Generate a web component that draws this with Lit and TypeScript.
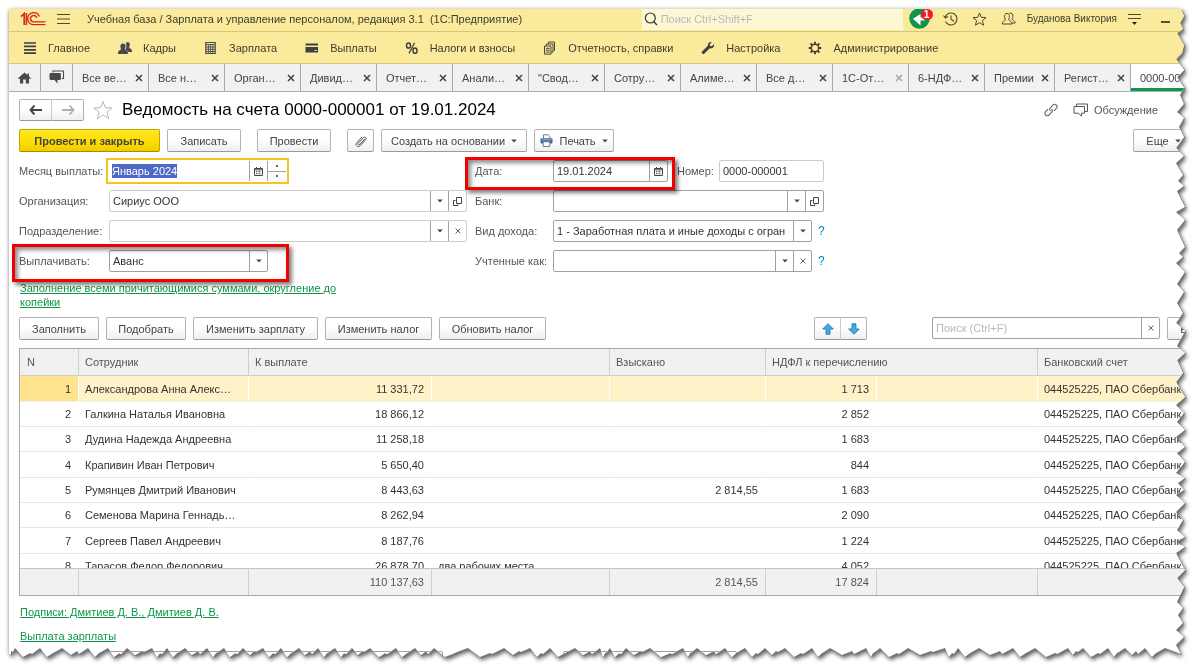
import { LitElement, html, css, svg, nothing, unsafeCSS } from "lit";
import { customElement, query } from "lit/decorators.js";
import { classMap } from "lit/directives/class-map.js";

/* Torn paper edge: [distance along the edge, depth cut from the edge]. */
const RIGHT_EDGE: [number, number][] = [
  [0, 4], [7, 1], [14, 5], [20, 2], [24, 8], [36, 1], [44, 3], [50, 9], [61, 1], [68, 8], [79, 1], [86, 5],
  [95, 1], [103, 8], [109, 1], [118, 6], [128, 1], [139, 9], [147, 1], [154, 9], [166, 2], [172, 7], [177, 1],
  [182, 8], [198, 0], [203, 9], [211, 0], [221, 8], [238, 0], [244, 6], [248, 2], [254, 9], [263, 0], [275, 8],
  [283, 1], [294, 8], [304, 2], [314, 9], [322, 0], [337, 8], [344, 0], [351, 8], [364, 2], [373, 9], [388, 0],
  [396, 9], [404, 1], [413, 8], [421, 0], [428, 9], [438, 0], [444, 8], [453, 0], [464, 9], [469, 0], [474, 7],
  [481, 1], [486, 9], [494, 0], [503, 9], [511, 2], [521, 8], [528, 0], [533, 9], [538, 0], [544, 9], [561, 0],
  [569, 8], [578, 1], [593, 8], [599, 2], [606, 7], [614, 2], [621, 9], [628, 1], [636, 9],
];
const BOTTOM_NOTCHES = [
  6, 31, 53, 79, 99, 118, 143, 158, 176, 198, 215, 234, 254, 272, 290, 309, 326, 343, 361, 387, 406, 425, 459,
  495, 521, 541, 566, 591, 601, 617, 641, 674, 688, 716, 736, 756, 776, 803, 821, 857, 871, 899, 936, 949, 970,
  1004, 1026, 1059, 1074, 1099, 1116, 1136, 1156,
];

function tornOutline(): string {
  const points = ["0 0", "calc(100% - 4px) 0"];
  for (const [y, cut] of RIGHT_EDGE) points.push(`calc(100% - ${cut}px) ${y}px`);
  points.push("calc(100% - 4px) calc(100% - 3px)");
  for (let i = BOTTOM_NOTCHES.length - 1; i >= 0; i--) {
    const x = BOTTOM_NOTCHES[i];
    const prev = i > 0 ? BOTTOM_NOTCHES[i - 1] : 0;
    const third = Math.round((x - prev) / 3);
    points.push(`${x}px calc(100% - 9px)`);
    points.push(`${x - third}px calc(100% - ${i % 2 ? 3 : 5}px)`);
    points.push(`${x - third - 2}px calc(100% - ${i % 3 ? 4 : 6}px)`);
    points.push(`${prev + third}px calc(100% - ${i % 3 ? 0 : 2}px)`);
  }
  points.push("0 calc(100% - 4px)");
  return `polygon(${points.join(",")})`;
}

const icon = (w: number, h: number, body: unknown) =>
  html`<svg class="icon" width=${w} height=${h} viewBox="0 0 ${w} ${h}" aria-hidden="true">${body}</svg>`;

const icons = {
  logo: icon(26, 14, svg`<g fill="none" stroke="#d8241c" stroke-width="1.4"><path d="M1 4.6 4.2 1.6V13M6.4 1V13" stroke-width="1.6"/><path d="M19.3 4.4A6 6 0 1 0 14 12.6H25.5"/><path d="M16.8 5.8A3.2 3.2 0 1 0 14 9.9H25.5"/></g>`),
  burger: icon(14, 12, svg`<path d="M0 1.500h13M0 6h13M0 10.500h13" stroke="#4a4738" stroke-width="1.1"/>`),
  main: icon(14, 14, svg`<path d="M1 2h12M1 5.400h12M1 8.800h12M1 12.200h12" stroke="#3f3f3f" stroke-width="1.7"/>`),
  staff: icon(14, 14, svg`<g fill="#4a4a4a"><path d="M9.3 1c1.8 0 2.6 1.3 2.5 3-.1 1.400-.6 2-.7 2.800.4.900 2.900.900 2.900 3.200V11H10.200C9.600 9.300 7.900 9 7.500 8.400 8.300 7.400 8.700 5.700 8.200 3.800 7.900 2 8.300 1 9.300 1z"/><path d="M5 2.500c1.900 0 2.700 1.400 2.600 3C7.500 7 7 7.500 6.900 8.300c.4 1 2.900.9 3 3.300V13H0v-1.400C.1 9.200 2.700 9.300 3.100 8.300 3 7.500 2.500 7 2.400 5.500 2.300 3.900 3.100 2.500 5 2.500z"/></g>`),
  calc: icon(14, 14, svg`<path d="M1.800 1.500h9.400v11H1.800z" fill="none" stroke="#4a4a4a" stroke-width="1.2"/><path d="M2 3.500h9M2 6h9M2 8.300h9M2 10.500h9M4.400 4v8.500M6.600 4v8.500M8.800 4v8.500" stroke="#4a4a4a" stroke-width=".9"/>`),
  card: icon(14, 14, svg`<path d="M.5 2.500h12.500v2H.5zM.5 6h12.500v5.500H.5z" fill="#3f3f3f"/><path d="M9.500 9.500h2.200" stroke="#faeb9c"/>`),
  percent: icon(14, 14, svg`<g fill="none" stroke="#3f3f3f" stroke-width="1.5"><ellipse cx="3.500" cy="4.500" rx="2" ry="2.600"/><ellipse cx="10" cy="9.700" rx="2" ry="2.600"/><path d="M9.600 1.800 4 12.400" stroke-width="1.200"/></g>`),
  reports: icon(14, 14, svg`<g fill="none" stroke="#4a4738"><path d="M1.500 5h6.500v8.200H1.500zM3.500 5V3h6.500v8.200H8M5.500 3V1h6v8.200h-1.500"/><path d="M2.800 7.300h4M2.800 9.200h4M2.800 11.100h4"/></g>`),
  wrench: icon(14, 14, svg`<path d="M13 3.200 10.700 5.200 8.900 4.800 8.700 3.200 10.900 1.100C8.700.500 6.600 2 6.800 4.700L.900 10.800c-.8 1.500 1 3 2.300 2L8.800 7.300C11.500 7.900 13.600 5.700 13 3.200z" fill="#3f3f3f"/>`),
  gear: icon(14, 14, svg`<circle cx="7" cy="7" r="3.700" fill="none" stroke="#3f3f3f" stroke-width="1.500"/><path d="M7 .7v2.400M7 10.900v2.400M.7 7h2.400M10.900 7h2.400M2.500 2.500l1.700 1.700M9.800 9.800l1.700 1.700M2.500 11.500l1.700-1.700M9.800 4.200l1.700-1.700" stroke="#3f3f3f" stroke-width="1.900"/>`),
  search: icon(14, 14, svg`<circle cx="6.300" cy="6" r="5" fill="none" stroke="#3b3b3b" stroke-width="1.200"/><path d="m9.800 9.800 3.200 3.200" stroke="#3b3b3b" stroke-width="1.500"/>`),
  news: icon(22, 22, svg`<circle cx="10.500" cy="10.500" r="10.300" fill="#0f9648"/><path d="M4 10.700 11.500 6v3.500h4v3h-4V17.500z" fill="#fff"/>`),
  history: icon(15, 14, svg`<path d="M2.300 5A6 6 0 1 1 2.500 9.500M.5 3.500 2.400 6 5 4.500M8 3.500V7.300l3 2" fill="none" stroke="#4a4738" stroke-width="1.100"/>`),
  star: icon(15, 14, svg`<path d="m7.500 1 1.800 4.300 4.700.3-3.600 3 1.200 4.600-4.100-2.500-4.100 2.500 1.200-4.600-3.600-3 4.700-.3z" fill="none" stroke="#4a4738"/>`),
  bigStar: icon(22, 20, svg`<path d="m11 1.500 2.400 6.200 6.800.3-5.300 4.200 1.800 6.500L11 15l-5.700 3.700 1.800-6.500L1.800 8l6.800-.3z" fill="none" stroke="#b5b9bd"/>`),
  users: icon(15, 14, svg`<g fill="none" stroke="#4a4738"><path d="M6 1.500C8 1.500 8.600 3 8.400 4.800 8.200 6.300 7.500 7 7.800 8c.8 1.200 3.200 1 3.400 4H1.200c.2-3 2.400-2.800 3-4 .2-1-.500-1.700-.6-3.200C3.400 3 4 1.500 6 1.500z"/><path d="M8.500 1.200c2.200-.5 3.700.900 3.300 3.400-.2 1.500-1 2-.6 2.900.6.900 2.800 1 3 3.500h-3"/></g>`),
  options: icon(14, 13, svg`<path d="M0 1.500h13M0 5.500h13" stroke="#4a4738" stroke-width="1.100"/><path d="M4 9h5L6.500 12z" fill="#222"/>`),
  home: icon(13, 12, svg`<path d="M6.500.5 0 6.200l1 1 1-.9v5.200h3.200V7.500h2.600v4H11V6.300l1 .9 1-1-2-1.800V1.500H9.500v1.600z" fill="#4a4a4a"/>`),
  chats: icon(16, 15, svg`<path d="M4 2.500V1h10.500v7.500h-1.700" fill="none" stroke="#4a4a4a" stroke-width="1.100"/><path d="M1.500 3h9.200q1.200 0 1.200 1.200v4.600q0 1.200-1.200 1.200H8.500v3.500L5.500 10h-4Q.5 10 .5 8.800V4.200Q.5 3 1.500 3z" fill="#4a4a4a"/>`),
  close: icon(8, 8, svg`<path d="m1 1 6 6M7 1 1 7" stroke="currentColor" stroke-width="1.500"/>`),
  cross: icon(6, 6, svg`<path d="m.5.5 5 5M5.500.5l-5 5" stroke="#666"/>`),
  back: icon(14, 10, svg`<path d="M5.500.500 1.500 5l4 4.500M1.500 5H13" fill="none" stroke="#444" stroke-width="2"/>`),
  forward: icon(14, 10, svg`<path d="M8.500.500 12.500 5l-4 4.500M12.500 5H1" fill="none" stroke="#b0b0b0" stroke-width="1.800"/>`),
  link: icon(14, 14, svg`<g fill="none" stroke="#666" stroke-width="1.100"><path d="M6.500 8.200C5.200 7 5.300 5.900 6.300 4.900L9 2c2.200-2 5.400.9 3.500 3.200L10 7.900"/><path d="M7.500 5.800c1.300 1.200 1.200 2.300.2 3.300L5 12c-2.200 2-5.400-.9-3.500-3.200L4 6.100"/></g>`),
  discuss: icon(15, 14, svg`<g fill="none" stroke="#555"><path d="M3.500 3V1h11v7.500H12"/><path d="M1 3.500h10.500v6.700H8.500v3L5.500 10.200H1z"/></g>`),
  clip: icon(14, 14, svg`<path d="m10.800 5-5 5.500c-1 .8-2.200-.3-1.500-1.300L9.500 3.500c1.300-1.300 3.500.4 2.300 2.100L6 11.900c-2 1.900-5.200-.6-3.400-3L8 3" fill="none" stroke="#555"/>`),
  printer: icon(13, 13, svg`<path d="M3.500 4.500V.8h4.700l1.600 1.600v2.100" fill="#fff" stroke="#6f8196"/><rect x=".5" y="4.300" width="12" height="5.200" rx="1" fill="#3c6690"/><path d="M1.500 5.800h10" stroke="#9db9d3"/><path d="M3.200 7.800h6.600v4.700H3.200z" fill="#fff" stroke="#6f8196"/>`),
  caret: icon(6, 4, svg`<path d="M.3.500h5.400L3 3.500z" fill="#444"/>`),
  calendar: icon(9, 9, svg`<path d="M.5 1.500h8v7h-8zM.5 2.800h8" fill="none" stroke="#444"/><path d="M2.500 0v2M6.500 0v2M2 4.700h5M2 6.700h5" stroke="#444" stroke-dasharray="1 .5"/>`),
  open: icon(10, 9, svg`<path d="M3.500.5h5v6h-5z" fill="none" stroke="#444"/><path d="M2.500 3.500h-2v5h4.500V7.500" fill="none" stroke="#444"/>`),
  up: icon(12, 12, svg`<path d="M6 .7 11.300 6H8v5.300H4V6H.7z" fill="#43ace8" stroke="#1e6ea8" stroke-width=".8"/>`),
  down: icon(12, 12, svg`<path d="M6 11.300 11.300 6H8V.7H4V6H.7z" fill="#43ace8" stroke="#1e6ea8" stroke-width=".8"/>`),
};

const SECTIONS: [unknown, string][] = [
  [icons.main, "Главное"],
  [icons.staff, "Кадры"],
  [icons.calc, "Зарплата"],
  [icons.card, "Выплаты"],
  [icons.percent, "Налоги и взносы"],
  [icons.reports, "Отчетность, справки"],
  [icons.wrench, "Настройка"],
  [icons.gear, "Администрирование"],
];

const TABS = [
  "Все ве…", "Все н…", "Орган…", "Дивид…", "Отчет…", "Анали…", "\"Свод…", "Сотру…", "Алиме…", "Все д…",
  "1С-От…", "6-НДФ…", "Премии", "Регист…",
];

interface Row {
  name: string;
  pay: string;
  note?: string;
  held?: string;
  tax: string;
}

const ROWS: Row[] = [
  { name: "Александрова Анна Алекс…", pay: "11 331,72", tax: "1 713" },
  { name: "Галкина Наталья Ивановна", pay: "18 866,12", tax: "2 852" },
  { name: "Дудина Надежда Андреевна", pay: "11 258,18", tax: "1 683" },
  { name: "Крапивин Иван Петрович", pay: "5 650,40", tax: "844" },
  { name: "Румянцев Дмитрий Иванович", pay: "8 443,63", held: "2 814,55", tax: "1 683" },
  { name: "Семенова Марина Геннадь…", pay: "8 262,94", tax: "2 090" },
  { name: "Сергеев Павел Андреевич", pay: "8 187,76", tax: "1 224" },
  { name: "Тарасов Федор Федорович", pay: "26 878,70", note: "два рабочих места", tax: "4 052" },
];

@customElement("app-root")
export class AppRoot extends LitElement {
  @query("#month") private monthInput!: HTMLInputElement;

  static styles = css`
    :host {
      display: block;
      box-sizing: border-box;
      padding: 9px 15px 14px 9px;
      overflow: hidden;
      background: #fff;
      color: #444;
      font: 11px/14px "Liberation Sans", Arial, sans-serif;
    }
    *, *::before, *::after { box-sizing: border-box; }
    button, input, select { font: inherit; color: inherit; margin: 0; }
    button { cursor: pointer; }
    .icon { display: block; flex: none; }
    .shadow {
      filter: drop-shadow(1px 1px 0 #777) drop-shadow(1px 2px 2px rgba(0, 0, 0, 0.6)) drop-shadow(0 0 2px rgba(0, 0, 0, 0.15));
    }
    .window { background: #fff; overflow: hidden; clip-path: ${unsafeCSS(tornOutline())}; }

    .titlebar {
      display: flex; align-items: center; height: 23px; padding: 0 15px 2px 11px;
      background: #faeb9c; border-bottom: 1px solid #d5c67c; color: #3f3c2c;
    }
    .plain { border: 0; padding: 0; background: none; display: flex; align-items: center; }
    .burger { margin: 0 16px 0 11px; }
    .app-name { flex: 1; white-space: pre; }
    .global-search {
      display: flex; align-items: center; gap: 3px; width: 261px; height: 21px; padding-left: 2px;
      background: #fef7d3;
    }
    .global-search input { flex: 1; min-width: 0; border: 0; padding: 0; background: none; outline: 0; }
    input::placeholder { color: #b9b9b9; opacity: 1; }
    .tools { display: flex; align-items: center; gap: 14px; margin-left: 6px; }
    .news { position: relative; margin-right: -2px; }
    .badge {
      position: absolute; top: 1px; right: -2px; width: 12px; height: 11px; border-radius: 6px;
      background: #ee1c25; color: #fff; font-size: 10px; line-height: 11px; font-weight: bold; text-align: center;
    }
    .user { font-size: 10px; margin: 0 -3px; }
    .minimize { width: 9px; height: 2px; margin: 6px 0 0 5px; background: #55513c; }

    .sections { display: flex; gap: 28px; height: 32px; padding: 0 14px; background: #faeb9c; border-bottom: 1px solid #d5c67c; }
    .sections a { display: flex; align-items: center; gap: 11px; color: #3f3c2c; text-decoration: none; white-space: nowrap; }

    .tabs { display: flex; height: 28px; background: #f1f1f1; border-bottom: 1px solid #aeaeae; overflow: hidden; }
    .tab {
      display: flex; flex: none; align-items: center; justify-content: space-between; width: 76px; padding: 0 5px 0 9px;
      border: 0; border-right: 1px solid #a9a9a9; background: none; white-space: nowrap;
    }
    .tab.square { width: 32px; padding: 0; justify-content: center; }
    .tab.short { width: 70px; }
    .tab.faded .icon { color: #a5a5a5; }
    .tab.active { width: 90px; background: #fff; box-shadow: inset 0 -3px #0f9648; }

    .content { padding: 7px 0 0 10px; margin-right: -9px; }
    .heading { display: flex; align-items: center; height: 22px; }
    .pair { display: flex; flex: none; }
    .pair .btn + .btn { border-left-color: #ccc; border-radius: 0 2px 2px 0; margin-left: -1px; }
    .pair .btn:first-child { border-radius: 2px 0 0 2px; }
    .btn {
      display: flex; flex: none; align-items: center; justify-content: center; gap: 6px; height: 23px; padding: 0 10px;
      border: 1px solid #b3b3b3; border-bottom-color: #9a9a9a; border-radius: 2px;
      background: linear-gradient(#fff 40%, #efefef); white-space: nowrap;
    }
    .nav .btn { width: 33px; height: 22px; padding: 0; }
    .favorite { margin: 0 8px; }
    h1 { flex: 1; margin: 0; color: #000; font-size: 17px; line-height: 20px; font-weight: normal; white-space: nowrap; }
    .head-links { display: flex; align-items: center; gap: 15px; margin-right: 36px; }
    .head-links a { display: flex; align-items: center; gap: 6px; color: #555; text-decoration: none; }

    .commands { display: flex; gap: 7px; margin-top: 8px; }
    .btn.primary {
      width: 141px; font-weight: bold; color: #444; border-color: #c3a700; border-bottom-color: #a38c00;
      background: linear-gradient(#ffe924, #fcdc00 60%, #efcd00);
    }
    .w27 { width: 27px; padding: 0; }
    .w61 { width: 61px; }
    .w74 { width: 74px; }
    .w80 { width: 80px; }
    .w107 { width: 107px; }
    .w125 { width: 125px; }
    .w146 { width: 146px; }
    .gap-before { margin-left: 9px; }
    .push { margin-left: auto; }

    .form { display: grid; grid-template-columns: 448px 1fr; column-gap: 8px; margin-top: 8px; }
    .column { display: flex; flex-direction: column; gap: 8px; }
    .line { display: flex; align-items: center; height: 22px; }
    .group { display: flex; align-items: center; position: relative; }
    .label { flex: none; width: 90px; color: #555; white-space: nowrap; }
    .right .label { width: 78px; }
    .right .label.near { width: 42px; margin-left: 9px; }
    .field {
      display: flex; flex: none; height: 22px; border: 1px solid #a0a0a0; border-radius: 2px; background: #fff; color: #333;
    }
    .field.light { border-color: #ccc; }
    .field input, .field select {
      flex: 1; min-width: 0; width: 0; padding: 0 3px; border: 0; background: none; outline: 0;
      appearance: none; text-overflow: clip;
    }
    .cell {
      display: flex; flex: none; align-items: center; justify-content: center; width: 18px; padding: 0;
      border: 0; border-left: 1px solid #a0a0a0; background: none;
    }
    .f105 { width: 105px; }
    .f115 { width: 115px; }
    .f159 { width: 159px; }
    .f259 { width: 259px; }
    .f271 { width: 271px; }
    .f358 { width: 358px; }
    .field.focused {
      width: 183px; height: 26px; margin: 0 0 0 -3px; padding: 1px 1px 1px 2px; border: 2px solid #f7c41c; border-radius: 0;
    }
    .focused input { padding: 0 2px; }
    .focused input::selection { background: #4f69c6; color: #fff; }
    .stepper { display: flex; flex: none; flex-direction: column; width: 19px; border-left: 1px solid #a0a0a0; }
    .stepper button {
      display: flex; flex: 1; align-items: center; justify-content: center; padding: 0; border: 0; background: none;
    }
    .stepper button:first-child { border-bottom: 1px solid #a0a0a0; }
    .dot { width: 2px; height: 2px; background: #666; }
    .help { margin-left: 6px; color: #0a80c8; text-decoration: none; font-size: 12px; }
    .marked::after {
      content: ""; position: absolute; border: 3px solid #f20000; pointer-events: none;
      box-shadow: 3px 3px 4px rgba(0, 0, 0, 0.5), inset 3px 3px 4px rgba(0, 0, 0, 0.45);
    }
    .marked.pay-kind::after { inset: -6px -21px -10px -7px; }
    .marked.date::after { inset: -3px -7px -8px -10px; }

    .green { color: #0f9648; text-decoration: underline; }
    .fill-note { display: block; width: 340px; margin: 9px 0 0 1px; }
    .list-commands { display: flex; gap: 7px; margin: 8px -34px 0 0; }
    .pair.arrows .btn { width: 27px; padding: 0; }
    .list-search { width: 228px; margin-left: 58px; }

    .grid { height: 248px; margin-top: 8px; border: 1px solid #a9a9a9; border-right: 0; overflow: hidden; }
    table { width: 100%; table-layout: fixed; border-collapse: separate; border-spacing: 0; }
    th, td { padding: 0 7px 0 6px; overflow: hidden; text-align: left; font-weight: normal; white-space: nowrap; }
    th { height: 27px; background: #f1f1f1; color: #555; border-right: 1px solid #cfcfcf; border-bottom: 1px solid #cfcfcf; }
    th:first-child { padding-left: 7px; }
    td { height: 25px; border-bottom: 1px solid #e6e6e6; border-right: 1px solid transparent; color: #333; }
    tbody tr:nth-child(3n + 1) td { height: 26px; }
    .num { text-align: right; }
    .current td { background: #fff2c8; border-right-color: #fff; border-bottom-color: #f0f0f0; }
    .current td:first-child { background: #ffe48d; }
    tfoot td {
      position: sticky; bottom: 0; height: 27px; background: #f1f1f1; color: #555;
      border-top: 1px solid #c3c3c3; border-right-color: #cfcfcf; border-bottom: 0;
    }
    .c-n { width: 59px; }
    .c-name { width: 170px; }
    .c-pay { width: 183px; }
    .c-note { width: 178px; }
    .c-held { width: 156px; }
    .c-tax { width: 111px; }
    .c-extra { width: 161px; }

    .links { display: flex; flex-direction: column; align-items: flex-start; gap: 10px; margin: 9px 0 0 1px; }
    .bottom-line { display: flex; gap: 120px; height: 6px; margin: 8px 0 0 90px; overflow: hidden; }
    .f334 { width: 334px; }
    .f174 { width: 174px; }
  `;

  protected firstUpdated() {
    this.monthInput.focus();
    this.monthInput.select();
  }

  private tab(name: string) {
    return html`<button class=${classMap({ tab: true, short: name === "Премии", faded: name === "1С-От…" })}>
      ${name}${icons.close}
    </button>`;
  }

  private row(r: Row, i: number) {
    return html`<tr class=${i === 0 ? "current" : nothing}>
      <td class="num">${i + 1}</td>
      <td>${r.name}</td>
      <td class="num">${r.pay}</td>
      <td>${r.note ?? ""}</td>
      <td class="num">${r.held ?? ""}</td>
      <td class="num">${r.tax}</td>
      <td></td>
      <td>044525225, ПАО Сбербанк</td>
    </tr>`;
  }

  render() {
    return html`
      <div class="shadow">
        <div class="window">
          <header class="titlebar">
            ${icons.logo}
            <button class="plain burger" aria-label="Меню">${icons.burger}</button>
            <span class="app-name">Учебная база / Зарплата и управление персоналом, редакция 3.1  (1С:Предприятие)</span>
            <label class="global-search">${icons.search}<input type="search" aria-label="Поиск" placeholder="Поиск Ctrl+Shift+F" /></label>
            <div class="tools">
              <button class="plain news" aria-label="Новости">${icons.news}<span class="badge">1</span></button>
              <button class="plain" aria-label="История">${icons.history}</button>
              <button class="plain" aria-label="Избранное">${icons.star}</button>
              <button class="plain" aria-label="Пользователи">${icons.users}</button>
              <span class="user">Буданова Виктория</span>
              <button class="plain" aria-label="Сервис">${icons.options}</button>
              <button class="plain minimize" aria-label="Свернуть"></button>
            </div>
          </header>
          <nav class="sections">
            ${SECTIONS.map(([glyph, name]) => html`<a href="#">${glyph}${name}</a>`)}
          </nav>
          <div class="tabs">
            <button class="tab square" aria-label="Начальная страница">${icons.home}</button>
            <button class="tab square" aria-label="Обсуждения">${icons.chats}</button>
            ${TABS.map((name) => this.tab(name))}
            <button class="tab active">0000-000001</button>
          </div>

          <main class="content">
            <div class="heading">
              <div class="pair nav">
                <button class="btn" aria-label="Назад">${icons.back}</button>
                <button class="btn" aria-label="Вперед">${icons.forward}</button>
              </div>
              <button class="plain favorite" aria-label="В избранное">${icons.bigStar}</button>
              <h1>Ведомость на счета 0000-000001 от 19.01.2024</h1>
              <div class="head-links">
                <a href="#" aria-label="Ссылка">${icons.link}</a>
                <a href="#">${icons.discuss}Обсуждение</a>
              </div>
            </div>

            <div class="commands">
              <button class="btn primary">Провести и закрыть</button>
              <button class="btn w74">Записать</button>
              <button class="btn w74 gap-before">Провести</button>
              <button class="btn w27 gap-before" aria-label="Файлы">${icons.clip}</button>
              <button class="btn w146">Создать на основании ${icons.caret}</button>
              <button class="btn w80">${icons.printer}Печать ${icons.caret}</button>
              <button class="btn w61 push">Еще ${icons.caret}</button>
            </div>

            <div class="form">
              <div class="column">
                <div class="line">
                  <label class="label" for="month">Месяц выплаты:</label>
                  <div class="field focused">
                    <input id="month" value="Январь 2024" />
                    <button class="cell" aria-label="Календарь">${icons.calendar}</button>
                    <span class="stepper">
                      <button aria-label="Больше"><i class="dot"></i></button>
                      <button aria-label="Меньше"><i class="dot"></i></button>
                    </span>
                  </div>
                </div>
                <div class="line">
                  <label class="label" for="org">Организация:</label>
                  <div class="field light f358">
                    <select id="org"><option>Сириус ООО</option></select>
                    <span class="cell">${icons.caret}</span>
                    <button class="cell" aria-label="Открыть">${icons.open}</button>
                  </div>
                </div>
                <div class="line">
                  <label class="label" for="dept">Подразделение:</label>
                  <div class="field light f358">
                    <select id="dept"><option></option></select>
                    <span class="cell">${icons.caret}</span>
                    <button class="cell" aria-label="Очистить">${icons.cross}</button>
                  </div>
                </div>
                <div class="line">
                  <div class="group marked pay-kind">
                    <label class="label" for="kind">Выплачивать:</label>
                    <div class="field f159">
                      <select id="kind"><option>Аванс</option></select>
                      <span class="cell">${icons.caret}</span>
                    </div>
                  </div>
                </div>
              </div>

              <div class="column right">
                <div class="line">
                  <div class="group marked date">
                    <label class="label" for="date">Дата:</label>
                    <div class="field f115">
                      <input id="date" value="19.01.2024" />
                      <button class="cell" aria-label="Календарь">${icons.calendar}</button>
                    </div>
                  </div>
                  <label class="label near" for="number">Номер:</label>
                  <div class="field light f105"><input id="number" value="0000-000001" /></div>
                </div>
                <div class="line">
                  <label class="label" for="bank">Банк:</label>
                  <div class="field f271">
                    <select id="bank"><option></option></select>
                    <span class="cell">${icons.caret}</span>
                    <button class="cell" aria-label="Открыть">${icons.open}</button>
                  </div>
                </div>
                <div class="line">
                  <label class="label" for="income">Вид дохода:</label>
                  <div class="field f259">
                    <select id="income"><option>1 - Заработная плата и иные доходы с огран</option></select>
                    <span class="cell">${icons.caret}</span>
                  </div>
                  <a class="help" href="#">?</a>
                </div>
                <div class="line">
                  <label class="label" for="counted">Учтенные как:</label>
                  <div class="field f259">
                    <select id="counted"><option></option></select>
                    <span class="cell">${icons.caret}</span>
                    <button class="cell" aria-label="Очистить">${icons.cross}</button>
                  </div>
                  <a class="help" href="#">?</a>
                </div>
              </div>
            </div>

            <a class="green fill-note" href="#">Заполнение всеми причитающимися суммами, округление до копейки</a>

            <div class="list-commands">
              <button class="btn w80">Заполнить</button>
              <button class="btn w80">Подобрать</button>
              <button class="btn w125">Изменить зарплату</button>
              <button class="btn w107">Изменить налог</button>
              <button class="btn w107">Обновить налог</button>
              <div class="pair arrows push">
                <button class="btn" aria-label="Вверх">${icons.up}</button>
                <button class="btn" aria-label="Вниз">${icons.down}</button>
              </div>
              <div class="field list-search">
                <input aria-label="Поиск в списке" placeholder="Поиск (Ctrl+F)" />
                <button class="cell" aria-label="Очистить">${icons.cross}</button>
              </div>
              <button class="btn w61">Еще ${icons.caret}</button>
            </div>

            <div class="grid">
              <table>
                <colgroup>
                  <col class="c-n" /><col class="c-name" /><col class="c-pay" /><col class="c-note" />
                  <col class="c-held" /><col class="c-tax" /><col class="c-extra" /><col />
                </colgroup>
                <thead>
                  <tr>
                    <th>N</th><th>Сотрудник</th><th colspan="2">К выплате</th><th>Взыскано</th>
                    <th colspan="2">НДФЛ к перечислению</th><th>Банковский счет</th>
                  </tr>
                </thead>
                <tbody>${ROWS.map((r, i) => this.row(r, i))}</tbody>
                <tfoot>
                  <tr>
                    <td></td><td></td><td class="num">110 137,63</td><td></td><td class="num">2 814,55</td>
                    <td class="num">17 824</td><td></td><td></td>
                  </tr>
                </tfoot>
              </table>
            </div>

            <div class="links">
              <a class="green" href="#">Подписи: Дмитиев Д. В., Дмитиев Д. В.</a>
              <a class="green" href="#">Выплата зарплаты</a>
            </div>
            <div class="bottom-line">
              <div class="field f334"><input aria-label="Комментарий" /></div>
              <div class="field f174"><input aria-label="Ответственный" /></div>
            </div>
          </main>
        </div>
      </div>
    `;
  }
}
